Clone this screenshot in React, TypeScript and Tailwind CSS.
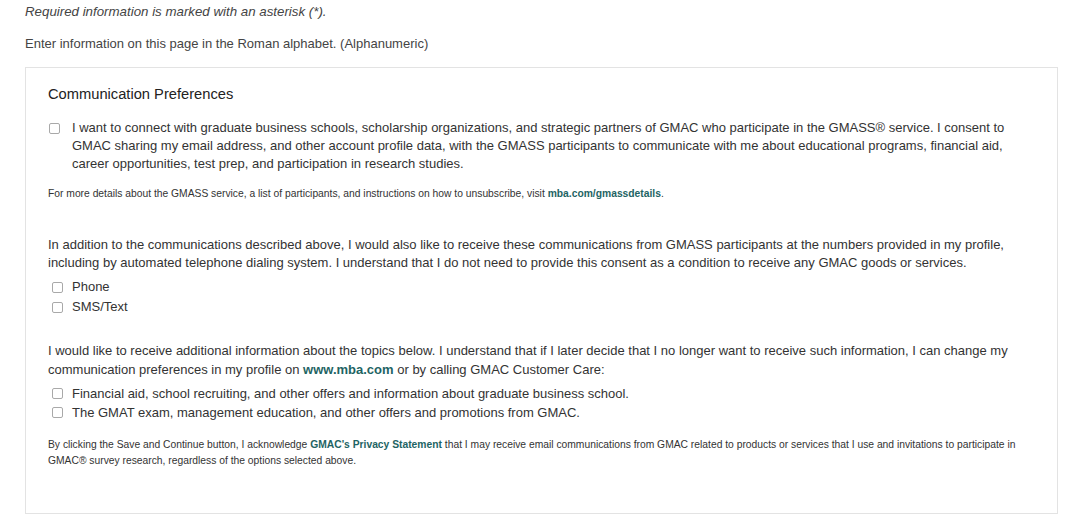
import React from "react";

const Box = ({ className = "" }: { className?: string }) => (
  <span
    className={`inline-block w-[11px] h-[11px] shrink-0 rounded-[2px] border border-[#a9a9a9] bg-white ${className}`}
  />
);

export default function App() {
  return (
    <div className="w-[1080px] h-[529px] bg-white text-[#333] overflow-hidden" style={{ fontFamily: '"Liberation Sans", Arial, sans-serif' }}>
      <div className="pl-[25px] pt-[4px]">
        <p className="italic text-[13.3px] leading-[16px] text-[#444]">Required information is marked with an asterisk (*).</p>
        <p className="mt-[16px] text-[13px] leading-[16px] text-[#444]">Enter information on this page in the Roman alphabet. (Alphanumeric)</p>
      </div>
      <div className="ml-[25px] mt-[15px] w-[1033px] h-[447px] border border-[#e3e3e3] pl-[22px] pr-[30px] pt-[17px]">
        <h2 className="text-[14.7px] leading-[18px] text-[#222]">Communication Preferences</h2>
        <div className="mt-[16px] flex gap-[12px]">
          <Box className="mt-[4px] ml-[1px]" />
          <p className="text-[13px] leading-[18px]">
            I want to connect with graduate business schools, scholarship organizations, and strategic partners of GMAC who participate in the GMASS® service. I consent to GMAC sharing my email address, and other account profile data, with the GMASS participants to communicate with me about educational programs, financial aid, career opportunities, test prep, and participation in research studies.
          </p>
        </div>
        <p className="mt-[14px] text-[10.3px] leading-[14px]">
          For more details about the GMASS service, a list of participants, and instructions on how to unsubscribe, visit <span className="font-bold text-[#1e6464]">mba.com/gmassdetails</span>.
        </p>
        <p className="mt-[35px] text-[13px] leading-[18px]">
          In addition to the communications described above, I would also like to receive these communications from GMASS participants at the numbers provided in my profile, including by automated telephone dialing system. I understand that I do not need to provide this consent as a condition to receive any GMAC goods or services.
        </p>
        <div className="mt-[5px] flex flex-col">
          <label className="flex items-center gap-[9px] pl-[4px] text-[13px] leading-[20px]"><Box />Phone</label>
          <label className="flex items-center gap-[9px] pl-[4px] text-[13px] leading-[20px]"><Box />SMS/Text</label>
        </div>
        <p className="mt-[24px] text-[13px] leading-[19px]">
          I would like to receive additional information about the topics below. I understand that if I later decide that I no longer want to receive such information, I can change my communication preferences in my profile on <span className="font-bold text-[#1e6464]">www.mba.com</span> or by calling GMAC Customer Care:
        </p>
        <div className="mt-[5px] flex flex-col">
          <label className="flex items-center gap-[9px] pl-[4px] text-[13px] leading-[19px]"><Box />Financial aid, school recruiting, and other offers and information about graduate business school.</label>
          <label className="flex items-center gap-[9px] pl-[4px] text-[13px] leading-[19px]"><Box />The GMAT exam, management education, and other offers and promotions from GMAC.</label>
        </div>
        <p className="mt-[15px] text-[10.3px] leading-[16px]">
          By clicking the Save and Continue button, I acknowledge <span className="font-bold text-[#1e6464]">GMAC's Privacy Statement</span> that I may receive email communications from GMAC related to products or services that I use and invitations to participate in GMAC® survey research, regardless of the options selected above.
        </p>
      </div>
    </div>
  );
}
